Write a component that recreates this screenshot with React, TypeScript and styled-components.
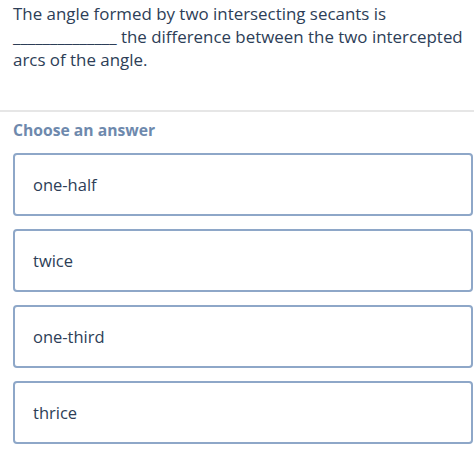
import styled, { createGlobalStyle } from 'styled-components';

const GlobalStyle = createGlobalStyle`
    body {
        margin: 0;
        background: #ffffff;
        font-family: 'Open Sans', 'Noto Sans', sans-serif;
    }
`;

const ANSWERS = ['one-half', 'twice', 'one-third', 'thrice'];

const App = () => {
    return (
        <>
            <GlobalStyle />
            <Page>
                <Question>
                    The angle formed by two intersecting secants is ______________ the difference between
                    the two intercepted arcs of the angle.
                </Question>
                <Divider />
                <AnswerSection>
                    <Label>Choose an answer</Label>
                    <AnswerList>
                        {ANSWERS.map((answer) => (
                            <AnswerButton key={answer}>{answer}</AnswerButton>
                        ))}
                    </AnswerList>
                </AnswerSection>
            </Page>
        </>
    );
};

export default App;

const Page = styled.div`
    width: 474px;
    height: 453px;
    overflow: hidden;
`;

const Question = styled.p`
    margin: 0;
    padding: 2px 6px 0 13px;
    font-size: 16.9px;
    line-height: 23px;
    color: #2d3e57;
    height: 110px;
    box-sizing: border-box;
`;

const Divider = styled.div`
    height: 2px;
    background-color: #e6e6e6;
`;

const AnswerSection = styled.div`
    padding: 8px 1px 0 13px;
`;

const Label = styled.h3`
    margin: 0 0 13px;
    font-size: 15.7px;
    line-height: 20px;
    font-weight: 700;
    color: #6e89ad;
`;

const AnswerList = styled.div`
    display: flex;
    flex-direction: column;
    gap: 13px;
`;

const AnswerButton = styled.div`
    display: flex;
    align-items: center;
    height: 63px;
    box-sizing: border-box;
    padding-left: 18px;
    border: 2px solid #8ea7c8;
    border-radius: 4px;
    font-size: 16.5px;
    color: #2d3e57;
    background-color: white;
`;
